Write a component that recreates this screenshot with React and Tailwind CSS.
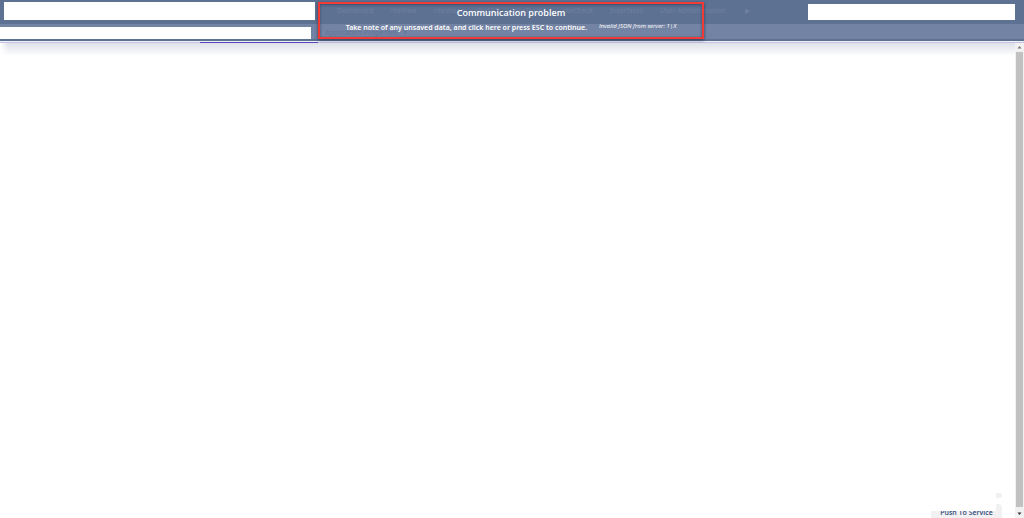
const navItems = [
  { label: 'Dashboard', width: 'w-[53px]' },
  { label: 'riteView', width: 'w-11' },
  { label: 'riteVision', width: 'w-[42px]' },
  { label: 'riteSET', width: 'w-[38px]' },
  { label: 'riteTrack', width: 'w-12' },
  { label: 'riteCheck', width: 'w-12' },
  { label: 'Interfaces', width: 'w-[50px]' },
  { label: 'User Administration', width: 'w-[85px]' },
];

function ErrorNotice() {
  return (
    <button
      type="button"
      className="absolute top-[2px] left-[318px] flex h-[37px] w-[386px] flex-col items-center border-2 border-[#f03a36] pt-[2px] text-white shadow-[0_1px_3px_#2c3c5c,inset_0_1px_3px_#3c4c6c]"
    >
      <span className="text-[9px] leading-[14px] font-semibold">Communication problem</span>
      <span className="flex items-center gap-3 font-['Noto_Sans',sans-serif] text-[7px] leading-[14px] font-semibold whitespace-nowrap">
        <span>Take note of any unsaved data, and click here or press ESC to continue.</span>
        <em className="mb-1 font-['Open_Sans',sans-serif] text-[6px] leading-3 font-normal">Invalid JSON from server: 1|X</em>
      </span>
    </button>
  );
}

function Header() {
  return (
    <header className="relative shrink-0">
      <div className="flex h-6 items-start justify-between bg-[#5d7193]">
        <div className="mt-[2px] ml-1 h-[18px] w-[311px] shrink-0 bg-white" />
        <nav className="ml-[22px] flex h-[22px] flex-1 items-center font-['Noto_Sans',sans-serif] text-[7px] whitespace-nowrap text-[#6f80a0]">
          {navItems.map(({ label, width }) => (
            <a key={label} href="#" className={`${width} shrink-0`}>{label}</a>
          ))}
          <span>▶</span>
        </nav>
        <div className="mt-1 mr-[9px] h-4 w-[207px] shrink-0 bg-white" />
      </div>
      <div className="flex h-[17px] items-center border-b-2 border-[#5d7193] bg-[#7383a3]">
        <div className="mt-[2px] h-3 w-[311px] bg-white" />
        <span className="mt-1 ml-[14px] font-['Noto_Sans',sans-serif] text-[7px] whitespace-nowrap text-[#63749a]">Application Properties &nbsp; ×</span>
      </div>
      <div className="h-px bg-[#eef0f8]" />
      <div className="h-px bg-[#c5c3df]">
        <div className="ml-[200px] h-px w-[118px] bg-[#5c41b8]" />
      </div>
      <ErrorNotice />
    </header>
  );
}

function Arrow({ className }) {
  return (
    <svg viewBox="0 0 9 9" className={`h-[9px] w-[9px] shrink-0 ${className}`}>
      <path d="M2.5 3.5h4l-2 2.5z" />
    </svg>
  );
}

function Scrollbar() {
  return (
    <div className="flex w-[9px] shrink-0 flex-col items-center bg-[#f1f1f1]">
      <Arrow className="rotate-180 fill-[#777]" />
      <div className="mb-[2px] w-[7px] flex-1 bg-[#c1c1c1]" />
      <Arrow className="fill-[#333]" />
    </div>
  );
}

export default function App() {
  return (
    <div className="flex h-screen flex-col overflow-hidden bg-white font-['Open_Sans',sans-serif]">
      <Header />
      <div className="flex min-h-0 flex-1">
        <main className="flex flex-1 flex-col justify-between">
          <div className="h-3 bg-linear-to-b from-[#dfe1e9] to-[#fcfcfd]">
            <div className="h-3 w-2 bg-linear-to-r from-white to-transparent" />
          </div>
          <div className="flex flex-col items-end pr-[13px]">
            <div className="mb-[6px] h-[5px] w-[6px] rounded-r-sm bg-[#f1f1f1]" />
            <div className="h-[7px] w-[6px] rounded-tr-sm bg-[#f1f1f1]" />
            <button
              type="button"
              className="flex h-[7px] w-[71px] items-start justify-center overflow-hidden bg-[#f1f1f1] text-[7px] leading-[4px] font-semibold text-[#2f4a80]"
            >
              Push To Service
            </button>
          </div>
        </main>
        <Scrollbar />
      </div>
    </div>
  );
}
